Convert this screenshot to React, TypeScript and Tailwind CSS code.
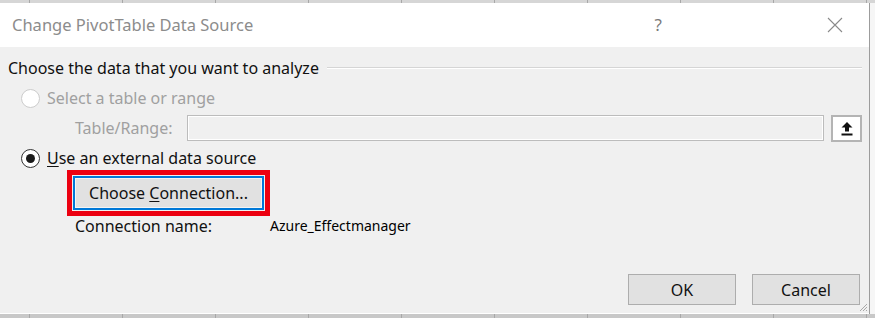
import React from 'react';

const font = { fontFamily: '"Noto Sans", "Open Sans", Arial, sans-serif' };

function GridStrip({ className }: { className: string }) {
  const cells = Array.from({ length: 10 });
  return (
    <div className={`flex ${className}`}>
      <div className="w-[30px] shrink-0 border-r border-[#a8a8a8]" />
      {cells.map((_, i) => (
        <div key={i} className="w-[93px] shrink-0 border-r border-[#a8a8a8]" />
      ))}
    </div>
  );
}

function Radio({ checked, disabled }: { checked?: boolean; disabled?: boolean }) {
  return (
    <span
      className={`flex h-[19px] w-[19px] shrink-0 items-center justify-center rounded-full border bg-white ${
        disabled ? 'border-[#cccccc]' : 'border-[#333333] border-[1.5px]'
      }`}
    >
      {checked && <span className="h-[9px] w-[9px] rounded-full bg-[#1a1a1a]" />}
    </span>
  );
}

export default function App() {
  return (
    <div className="flex h-[318px] w-[875px] flex-col overflow-hidden bg-white" style={font}>
      <GridStrip className="h-[3px] bg-[#d6d6d6]" />
      <div className="flex flex-1">
        <div className="flex w-[870px] flex-col border-r border-[#9c9c9c]">
          {/* title bar */}
          <div className="flex h-[44px] items-center bg-white pl-[12px] pr-[24px]">
            <span className="text-[16.5px] text-[#8c8c8c]">Change PivotTable Data Source</span>
            <span className="ml-auto mr-[165px] text-[17px] text-[#7a7a7a]">?</span>
            <svg width="16" height="16" viewBox="0 0 16 16" className="mr-[2px]">
              <path d="M1 1 L15 15 M15 1 L1 15" stroke="#8a8a8a" strokeWidth="1.1" />
            </svg>
          </div>

          {/* body */}
          <div className="relative flex flex-1 flex-col bg-[#f0f0f0] pl-[8px] pr-[7px] text-[16px] leading-[22px]">
            <div className="mt-[9px] flex h-[24px] items-center">
              <span className="text-[#111111]">Choose the data that you want to analyze</span>
              <div className="ml-[8px] flex-1 border-t border-b border-t-[#d5d5d5] border-b-white" />
            </div>

            <div className="mt-[6px] flex h-[24px] items-center gap-[7px] pl-[13px]">
              <Radio disabled />
              <span className="text-[#a0a0a0]">Select a table or range</span>
            </div>

            <div className="mt-[5px] flex h-[26px] items-center pl-[67px]">
              <span className="w-[112px] text-[#a0a0a0]">Table/Range:</span>
              <div className="h-[26px] flex-1 border border-[#bcbcbc] bg-white p-px">
                <div className="h-full w-full bg-[#f0f0f0]" />
              </div>
              <div className="ml-[7px] flex h-[27px] w-[31px] items-center justify-center border-2 border-[#b4b4b4] bg-white">
                <svg width="14" height="15" viewBox="0 0 14 15">
                  <path d="M7 1 L12.5 6.5 L9 6.5 L9 10.5 L5 10.5 L5 6.5 L1.5 6.5 Z" fill="#111111" />
                  <rect x="1.5" y="12.5" width="11" height="2" fill="#111111" />
                </svg>
              </div>
            </div>

            <div className="mt-[5px] flex h-[24px] items-center gap-[7px] pl-[13px]">
              <Radio checked />
              <span className="text-[#111111]">
                <span className="underline underline-offset-2">U</span>se an external data source
              </span>
            </div>

            <div className="ml-[59px] flex h-[46px] w-[203px] border-[5px] border-[#ec0010] p-px">
              <div className="flex flex-1 items-center justify-center border-2 border-[#0078d7] bg-[#e1e1e1] shadow-[inset_0_0_0_1px_#f4f4f4]">
                <span className="text-[#111111]">
                  Choose <span className="underline underline-offset-2">C</span>onnection...
                </span>
              </div>
            </div>

            <div className="flex h-[20px] items-center pl-[67px]">
              <span className="w-[195px] text-[#111111]">Connection name:</span>
              <span className="text-[14px] text-black">Azure_Effectmanager</span>
            </div>

            <div className="mt-[38px] flex justify-end gap-[16px] pr-[2px]">
              <button className="flex h-[31px] w-[108px] items-center justify-center border border-[#adadad] bg-[#e1e1e1] text-[#111111]">
                OK
              </button>
              <button className="flex h-[31px] w-[108px] items-center justify-center border border-[#adadad] bg-[#e1e1e1] text-[#111111]">
                Cancel
              </button>
            </div>

            <svg width="9" height="9" viewBox="0 0 9 9" className="absolute bottom-[1px] right-[1px]">
              <path d="M8 1 L1 8 M8 4 L4 8 M8 7 L7 8" stroke="#a8a8a8" strokeWidth="1" />
            </svg>
          </div>
          <div className="h-px bg-white" />
        </div>
        <div className="flex-1 bg-[#f6f6f6]" />
      </div>
      <GridStrip className="h-[4px] bg-[#c8c8c8]" />
    </div>
  );
}
